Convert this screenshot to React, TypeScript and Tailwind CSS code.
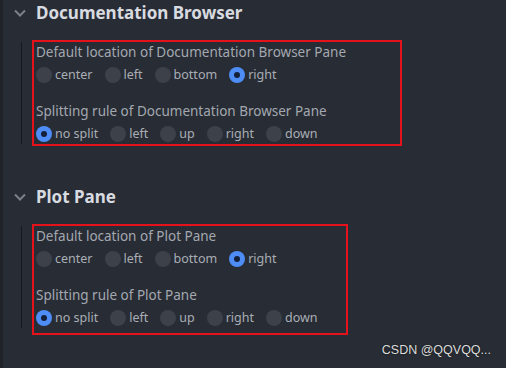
import React from 'react';

type Opt = { label: string; on?: boolean };

const LOCATION: Opt[] = [{ label: 'center' }, { label: 'left' }, { label: 'bottom' }, { label: 'right', on: true }];
const SPLIT: Opt[] = [{ label: 'no split', on: true }, { label: 'left' }, { label: 'up' }, { label: 'right' }, { label: 'down' }];

function Radio({ label, on }: Opt) {
  return (
    <div className="flex items-center gap-[3px]">
      {on ? (
        <span className="flex h-4 w-4 items-center justify-center rounded-full bg-[#4e8cf6]">
          <span className="h-[6px] w-[6px] rounded-full bg-[#14203a]" />
        </span>
      ) : (
        <span className="h-4 w-4 rounded-full bg-[#3d414a]" />
      )}
      <span className="text-[12.5px] leading-4 text-[#a9aeb6]">{label}</span>
    </div>
  );
}

function RadioRow({ options }: { options: Opt[] }) {
  return (
    <div className="flex h-4 items-center gap-3">
      {options.map((o) => (
        <Radio key={o.label} {...o} />
      ))}
    </div>
  );
}

function Chevron() {
  return (
    <svg width="12" height="8" viewBox="0 0 12 8" className="shrink-0">
      <path d="M1 1.5 L6 6.5 L11 1.5" fill="none" stroke="#7b808a" strokeWidth="2" />
    </svg>
  );
}

function Section({ title, pane, boxWidth, bottom }: { title: string; pane: string; boxWidth: string; bottom: number }) {
  return (
    <div>
      <div className="flex h-[26px] items-center">
        <div className="ml-[14px] mr-[10px] flex items-center">
          <Chevron />
        </div>
        <span className="text-[17px] font-bold text-[#d8dbe0]">{title}</span>
      </div>
      <div className="mt-[14px] flex">
        <div className="ml-[21px] mt-[2px] w-px self-stretch bg-[#16181c]" style={{ marginBottom: bottom }} />
        <div className={`ml-[10px] border-2 border-[#e5121b] pl-[2px] ${boxWidth} ${bottom > 2 ? 'pb-[7px]' : 'pb-[2px]'}`}>
          <div className="text-[13.5px] leading-[20px] text-[#a3a8b0]">Default location of {pane}</div>
          <div className="mt-[5px]">
            <RadioRow options={LOCATION} />
          </div>
          <div className="mt-[18px] text-[13.5px] leading-[20px] text-[#a3a8b0]">Splitting rule of {pane}</div>
          <div className="mt-[5px]">
            <RadioRow options={SPLIT} />
          </div>
        </div>
      </div>
    </div>
  );
}

export default function App() {
  return (
    <div className="flex h-[368px] w-[506px] overflow-hidden bg-[#282c34] font-['Noto_Sans',sans-serif]">
      <div className="w-[3px] shrink-0 bg-[#1f2227]" />
      <div className="relative flex-1">
        <div className="-ml-[3px]">
          <Section title="Documentation Browser" pane="Documentation Browser Pane" boxWidth="w-[370px]" bottom={2} />
          <div className="h-[38px]" />
          <Section title="Plot Pane" pane="Plot Pane" boxWidth="w-[316px]" bottom={7} />
        </div>
        <div className="absolute bottom-[8px] right-[15px] font-['Liberation_Sans',sans-serif] text-[12.5px] text-[#dcdcdc] [text-shadow:0_0_2px_rgba(0,0,0,0.6)]">
          CSDN @QQVQQ...
        </div>
      </div>
    </div>
  );
}
